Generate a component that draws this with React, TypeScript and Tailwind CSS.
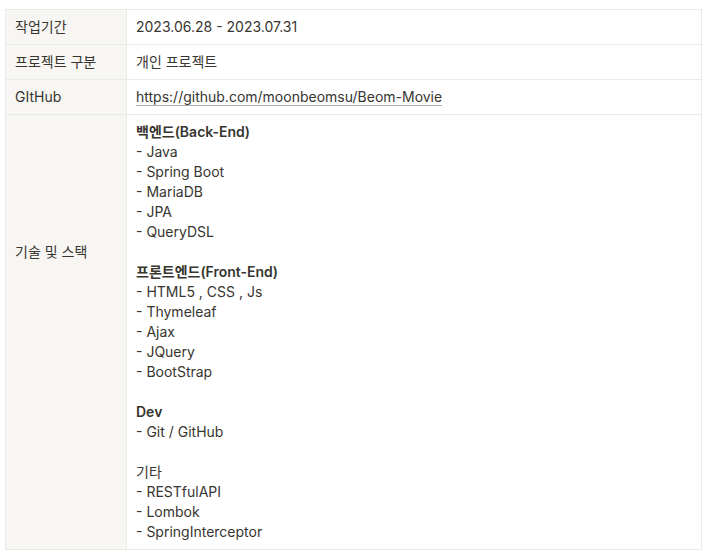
import React from 'react';

const rows: { label: string; content: React.ReactNode }[] = [
  { label: '작업기간', content: '2023.06.28 - 2023.07.31' },
  { label: '프로젝트 구분', content: '개인 프로젝트' },
  {
    label: 'GItHub',
    content: (
      <a
        href="#"
        className="underline decoration-[#37352f]/40 underline-offset-[3px] decoration-1"
      >
        https://github.com/moonbeomsu/Beom-Movie
      </a>
    ),
  },
];

const stack: { title: string; bold: boolean; items: string[] }[] = [
  { title: '백엔드(Back-End)', bold: true, items: ['Java', 'Spring Boot', 'MariaDB', 'JPA', 'QueryDSL'] },
  { title: '프론트엔드(Front-End)', bold: true, items: ['HTML5 , CSS , Js', 'Thymeleaf', 'Ajax', 'JQuery', 'BootStrap'] },
  { title: 'Dev', bold: true, items: ['Git / GitHub'] },
  { title: '기타', bold: false, items: ['RESTfulAPI', 'Lombok', 'SpringInterceptor'] },
];

export default function App() {
  return (
    <div
      className="min-h-screen bg-white pt-[9px] pl-[5px] text-[14px] leading-[20px] text-[#37352f]"
      style={{ fontFamily: 'Inter, "Noto Sans CJK KR", sans-serif' }}
    >
      <table className="w-[697px] border-collapse">
        <tbody>
          {rows.map((row) => (
            <tr key={row.label}>
              <td className="w-[121px] border border-[#e9e9e7] bg-[#f7f6f3] px-[9px] py-[7px] align-middle">
                {row.label}
              </td>
              <td className="border border-[#e9e9e7] px-[9px] py-[7px]">{row.content}</td>
            </tr>
          ))}
          <tr>
            <td className="w-[121px] border border-[#e9e9e7] bg-[#f7f6f3] px-[9px] pt-[127px] pb-[7px] align-top">
              기술 및 스택
            </td>
            <td className="border border-[#e9e9e7] px-[9px] py-[7px]">
              {stack.map((group, i) => (
                <div key={group.title}>
                  {i > 0 && <div className="h-[20px]" />}
                  <div className={group.bold ? 'font-semibold' : ''}>{group.title}</div>
                  {group.items.map((item) => (
                    <div key={item}>- {item}</div>
                  ))}
                </div>
              ))}
            </td>
          </tr>
        </tbody>
      </table>
    </div>
  );
}
